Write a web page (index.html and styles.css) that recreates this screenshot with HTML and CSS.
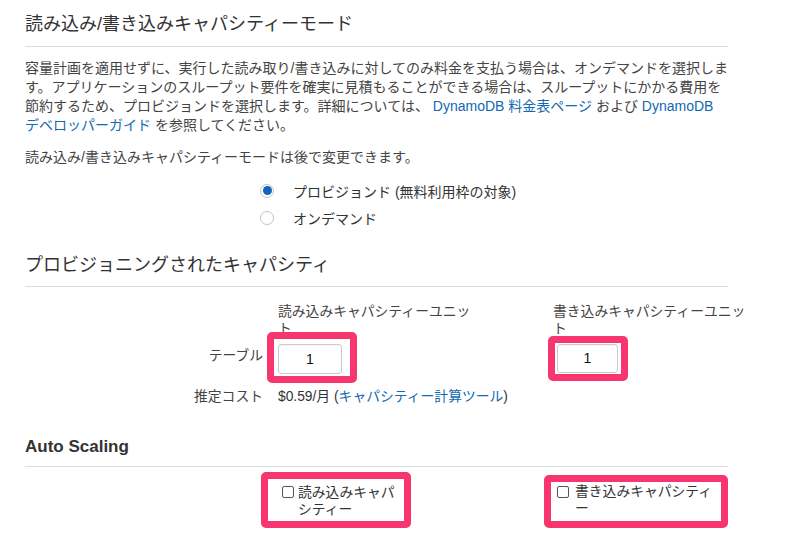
FILE: index.html
```html
<!DOCTYPE html>
<html lang="ja">
<head>
<meta charset="utf-8">
<title>DynamoDB キャパシティー</title>
<link rel="stylesheet" href="styles.css">
</head>
<body>
<div class="page">
  <section class="sec">
    <h2 class="sec-title">読み込み/書き込みキャパシティーモード</h2>
    <p class="desc">容量計画を適用せずに、実行した読み取り/書き込みに対してのみ料金を支払う場合は、オンデマンドを選択しま<br>す。アプリケーションのスループット要件を確実に見積もることができる場合は、スループットにかかる費用を<br>節約するため、プロビジョンドを選択します。詳細については、 <a class="link" href="#">DynamoDB 料金表ページ</a> および <a class="link" href="#">DynamoDB<br>デベロッパーガイド</a> を参照してください。</p>
    <p class="note">読み込み/書き込みキャパシティーモードは後で変更できます。</p>
    <div class="radios">
      <label class="radio-row"><span class="radio radio--checked"></span>プロビジョンド (無料利用枠の対象)</label>
      <label class="radio-row"><span class="radio"></span>オンデマンド</label>
    </div>
  </section>

  <section class="sec">
    <h2 class="sec-title sec-title--cap">プロビジョニングされたキャパシティ</h2>
    <div class="cap-grid">
      <div></div>
      <div class="cap-head">読み込みキャパシティーユニット</div>
      <div class="cap-head">書き込みキャパシティーユニット</div>

      <div class="cap-key cap-key--table">テーブル</div>
      <div class="pink-box pink-box--read"><input class="num num--read" type="text" value="1"></div>
      <div class="pink-box pink-box--write"><input class="num num--write" type="text" value="1"></div>

      <div class="cap-key cap-key--cost">推定コスト</div>
      <div class="cap-cost">$0.59/月 (<a class="link" href="#">キャパシティー計算ツール</a>)</div>
    </div>
  </section>

  <section class="sec">
    <h3 class="sec-title sec-title--auto">Auto Scaling</h3>
    <div class="cb-row">
      <label class="pink-box cb-box cb-box--read"><span class="checkbox"></span><span class="cb-text">読み込みキャパシティー</span></label>
      <label class="pink-box cb-box cb-box--write"><span class="checkbox"></span><span class="cb-text">書き込みキャパシティー</span></label>
    </div>
  </section>
</div>
</body>
</html>
```

FILE: styles.css
```css
* { box-sizing: border-box; }

body {
  margin: 0;
  background: #fff;
  color: #444;
  font-family: "Liberation Sans", "Noto Sans CJK JP", sans-serif;
  font-size: 13.8px;
  text-spacing-trim: space-all;
}

.page {
  width: 728px;
  padding: 12px 0 0 25px;
}

.sec-title {
  margin: 0;
  font-size: 18px;
  font-weight: normal;
  line-height: 24px;
  color: #333;
  padding-bottom: 10px;
  border-bottom: 1px solid #dcdcdc;
}

.sec-title--cap {
  margin-top: 22px;
  padding-bottom: 9px;
}

.sec-title--auto {
  margin-top: 31.5px;
  font-size: 17px;
  font-weight: bold;
  line-height: 22px;
  padding-bottom: 8px;
}

.desc {
  margin: 12px 0 0;
  font-size: 14px;
  line-height: 19px;
  white-space: nowrap;
}

.note {
  margin: 13px 0 0;
  font-size: 14px;
  line-height: 19px;
}

.link {
  color: #1169b0;
  text-decoration: none;
}

.radios {
  margin: 10px 0 0 235px;
  font-size: 14px;
}

.radio-row {
  display: flex;
  align-items: center;
  gap: 19px;
  height: 27px;
  color: #333;
}

.radio {
  width: 14px;
  height: 14px;
  border-radius: 50%;
  border: 1px solid #c4c4c4;
  background: #fff;
  display: flex;
  align-items: center;
  justify-content: center;
}

.radio--checked::after {
  content: "";
  width: 9px;
  height: 9px;
  border-radius: 50%;
  background: #1464bd;
}

.cap-grid {
  display: grid;
  grid-template-columns: 238px 260px 198px;
  column-gap: 15px;
  margin-top: 15.5px;
  align-items: start;
}

.cap-head {
  max-width: 198px;
  line-height: 17px;
  color: #444;
}

.cap-key {
  text-align: right;
  line-height: 17px;
  color: #444;
}

.cap-key--table { padding-top: 10px; }
.cap-key--cost { padding-top: 5px; }

.cap-cost {
  grid-column: 2 / 4;
  padding-top: 5px;
  line-height: 17px;
  color: #333;
}

.pink-box {
  position: relative;
  background: #fff;
  border: 7px solid #f7356f;
  border-radius: 5px;
  justify-self: start;
}

.pink-box--read {
  margin: -5px 0 0 -11px;
  padding: 5px 8px 2px 4px;
}

.pink-box--write {
  margin: -1px 0 0 -5px;
  padding: 1px 3px 1px 2px;
}

.num {
  display: block;
  margin: 0;
  border: 1px solid #cbcbcb;
  border-radius: 3px;
  background: #fff;
  box-shadow: inset 0 1px 1px rgba(0, 0, 0, 0.04);
  text-align: center;
  font-family: "Liberation Sans", sans-serif;
  font-size: 14px;
  color: #111;
  padding: 0;
}

.num--read { width: 64px; height: 30px; }
.num--write { width: 61px; height: 29px; }

.cb-row {
  display: flex;
  align-items: flex-start;
  margin-top: 5px;
  padding-left: 236px;
}

.cb-box {
  display: flex;
  align-items: flex-start;
  color: #333;
  line-height: 17px;
}

.cb-box--read {
  width: 150px;
  gap: 4px;
  padding: 4.5px 0 3.5px 14px;
}

.cb-box--write {
  width: 184px;
  gap: 6px;
  margin: 3px 0 0 133px;
  padding: 1px 0 4px 6px;
}

.checkbox {
  flex: none;
  width: 12px;
  height: 12px;
  margin-top: 2.5px;
  border: 1px solid #555;
  border-radius: 2px;
  background: #fff;
}

.cb-text {
  flex: 1;
  min-width: 0;
}
```
